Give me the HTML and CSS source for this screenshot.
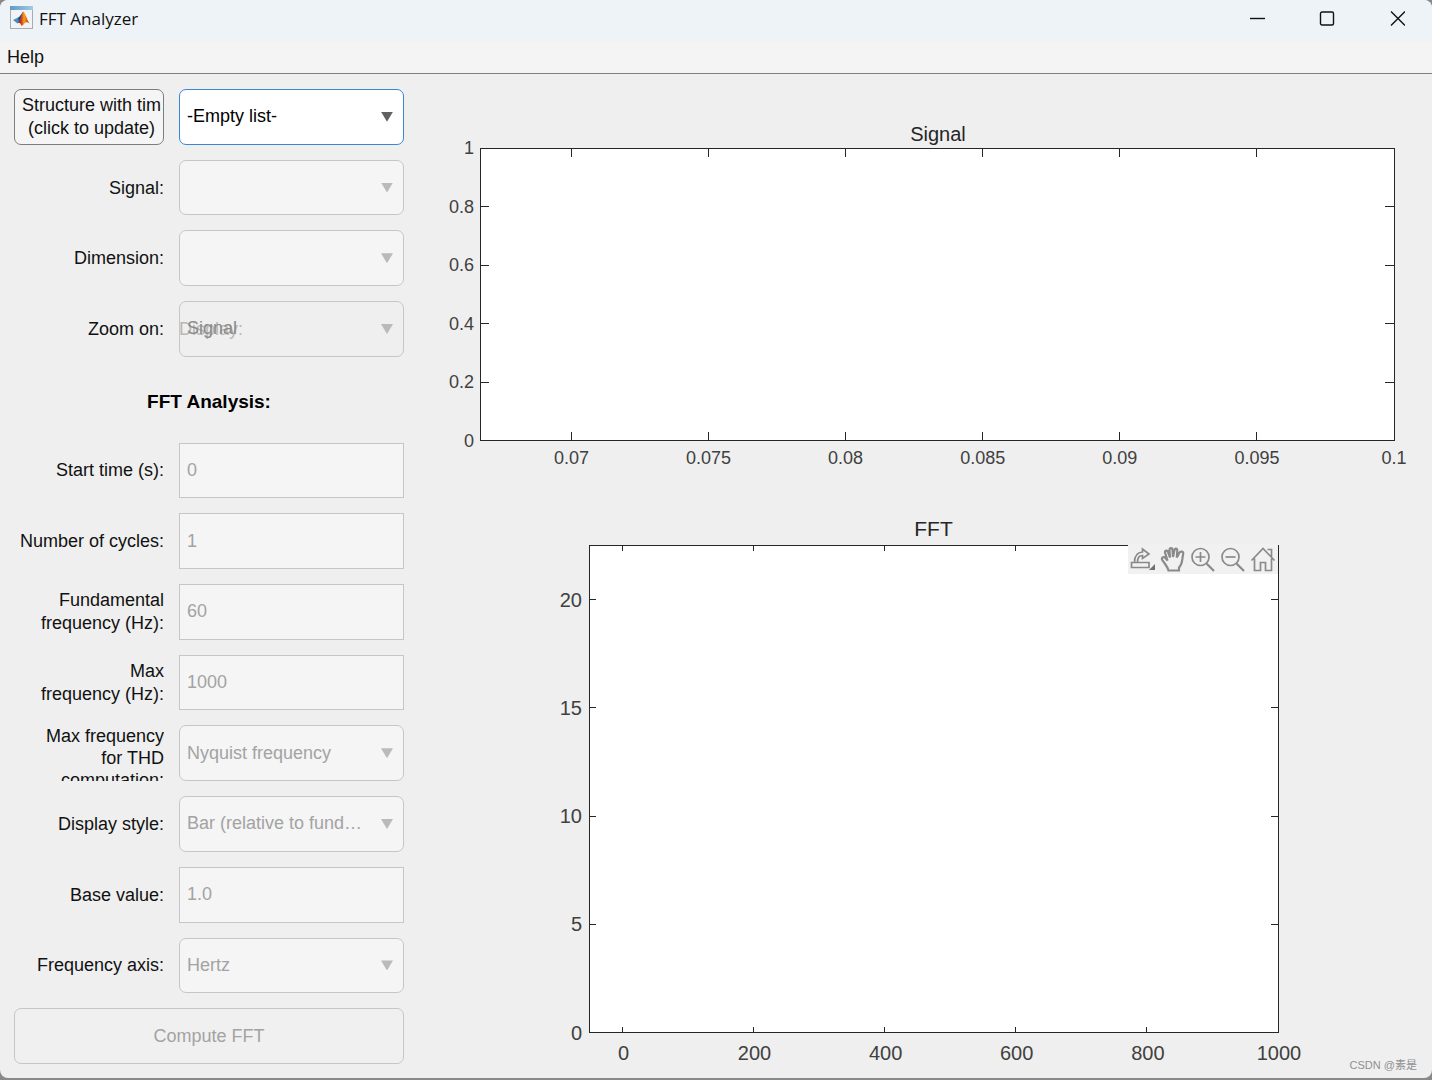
FILE: index.html
```html
<!DOCTYPE html>
<html lang="en">
<head>
<meta charset="utf-8">
<meta name="viewport" content="width=device-width, initial-scale=1">
<title>FFT Analyzer</title>
<link rel="stylesheet" href="styles.css">
</head>
<body>
<div class="window">
  <header class="titlebar">
    <svg class="app-icon" viewBox="0 0 23 23" aria-hidden="true">
      <defs>
        <linearGradient id="bar" x1="0" x2="1"><stop offset="0" stop-color="#5f9bc4"/><stop offset="1" stop-color="#a3cbe3"/></linearGradient>
        <linearGradient id="peak" x1="0" x2="1"><stop offset="0" stop-color="#7a1d12"/><stop offset=".35" stop-color="#d9431a"/><stop offset=".55" stop-color="#f6a21c"/><stop offset="1" stop-color="#b3260f"/></linearGradient>
      </defs>
      <rect x="0.5" y="0.5" width="22" height="22" fill="#f2f3f5" stroke="#a5acb3"/>
      <rect x="0" y="0" width="23" height="4" fill="url(#bar)"/>
      <path d="M3 14 8 11.5 10.5 14.5 7.500 17.500z" fill="#3f8fc4"/>
      <path d="M8 11.500C10 11 11 8 13 6L11.500 14 9 16z" fill="#1e4f8c"/>
      <path d="M13 5.500C15 6 16.500 13 19.500 17.500 17 15.500 15.500 16 14 18 12.500 20 11.500 20 11 19 10.500 17 9 16.500 7.500 17.500 10.500 15 11.500 7 13 5.500z" fill="url(#peak)"/>
    </svg>
    <h1 class="title">FFT Analyzer</h1>
    <div class="window-buttons">
      <button class="window-button" type="button" aria-label="Minimize"><svg viewBox="0 0 16 16"><path d="M1 7.500H16"/></svg></button>
      <button class="window-button" type="button" aria-label="Maximize"><svg viewBox="0 0 16 16"><rect x="1.500" y="1" width="13" height="13" rx="1.500"/></svg></button>
      <button class="window-button" type="button" aria-label="Close"><svg viewBox="0 0 16 16"><path d="M2 0.500 16 14.500M16 0.500 2 14.500"/></svg></button>
    </div>
  </header>
  <nav class="menubar"><button class="menu" type="button">Help</button></nav>

  <main class="content">
    <form class="form">
      <button class="button update" type="button">Structure with tim<br>(click to update)</button>
      <div class="picker"><select class="field select active" aria-label="Structure with time"><option>-Empty list-</option></select><span class="arrow"></span></div>

      <label class="label" for="signal">Signal:</label>
      <div class="picker"><select class="field select" id="signal" disabled><option></option></select><span class="arrow"></span></div>

      <label class="label" for="dimension">Dimension:</label>
      <div class="picker"><select class="field select" id="dimension" disabled><option></option></select><span class="arrow"></span></div>

      <label class="label" for="zoom">Zoom on:</label>
      <div class="picker"><span class="ghost">Display:</span><select class="field select clear" id="zoom" disabled><option>Signal</option></select><span class="arrow"></span></div>

      <h2 class="heading">FFT Analysis:</h2>

      <label class="label" for="start">Start time (s):</label>
      <input class="field" id="start" value="0" disabled>

      <label class="label" for="cycles">Number of cycles:</label>
      <input class="field" id="cycles" value="1" disabled>

      <label class="label" for="fundamental">Fundamental frequency (Hz):</label>
      <input class="field" id="fundamental" value="60" disabled>

      <label class="label" for="maxfreq">Max<br>frequency (Hz):</label>
      <input class="field" id="maxfreq" value="1000" disabled>

      <label class="label cropped" for="thd">Max frequency<br>for THD computation:</label>
      <div class="picker"><select class="field select" id="thd" disabled><option>Nyquist frequency</option></select><span class="arrow"></span></div>

      <label class="label" for="style">Display style:</label>
      <div class="picker"><select class="field select" id="style" disabled><option>Bar (relative to fundamental)</option></select><span class="arrow"></span></div>

      <label class="label" for="base">Base value:</label>
      <input class="field" id="base" value="1.0" disabled>

      <label class="label" for="axis">Frequency axis:</label>
      <div class="picker"><select class="field select" id="axis" disabled><option>Hertz</option></select><span class="arrow"></span></div>

      <button class="button compute" type="button" disabled>Compute FFT</button>
    </form>

    <section class="charts">
      <div class="chart signal-chart">
        <svg class="plot" role="img" aria-label="Signal">
          <rect class="frame" width="100%" height="100%"/>
          <text class="chart-title" x="50%" dx="1" y="-7">Signal</text>
          <g class="ticks">
            <line x1="10%" x2="10%" y2="9"/><line x1="25%" x2="25%" y2="9"/><line x1="40%" x2="40%" y2="9"/><line x1="55%" x2="55%" y2="9"/><line x1="70%" x2="70%" y2="9"/><line x1="85%" x2="85%" y2="9"/>
            <line y1="20%" y2="20%" x2="9"/><line y1="40%" y2="40%" x2="9"/><line y1="60%" y2="60%" x2="9"/><line y1="80%" y2="80%" x2="9"/>
          </g>
          <svg class="edge ticks" y="100%">
            <line x1="10%" x2="10%" y2="-9"/><line x1="25%" x2="25%" y2="-9"/><line x1="40%" x2="40%" y2="-9"/><line x1="55%" x2="55%" y2="-9"/><line x1="70%" x2="70%" y2="-9"/><line x1="85%" x2="85%" y2="-9"/>
          </svg>
          <svg class="edge ticks" x="100%">
            <line y1="20%" y2="20%" x2="-9"/><line y1="40%" y2="40%" x2="-9"/><line y1="60%" y2="60%" x2="-9"/><line y1="80%" y2="80%" x2="-9"/>
          </svg>
          <g class="y-labels">
            <text x="-6" dy="6" y="0%">1</text><text x="-6" dy="6" y="20%">0.8</text><text x="-6" dy="6" y="40%">0.6</text><text x="-6" dy="6" y="60%">0.4</text><text x="-6" dy="6" y="80%">0.2</text><text x="-6" dy="6" y="100%">0</text>
          </g>
          <g class="x-labels">
            <text y="100%" dy="23" x="10%">0.07</text><text y="100%" dy="23" x="25%">0.075</text><text y="100%" dy="23" x="40%">0.08</text><text y="100%" dy="23" x="55%">0.085</text><text y="100%" dy="23" x="70%">0.09</text><text y="100%" dy="23" x="85%">0.095</text><text y="100%" dy="23" x="100%">0.1</text>
          </g>
        </svg>
      </div>

      <div class="chart fft-chart">
        <svg class="plot" role="img" aria-label="FFT">
          <rect class="frame" width="100%" height="100%"/>
          <text class="chart-title" x="50%" y="-9">FFT</text>
          <g class="ticks">
            <line x1="4.860%" x2="4.860%" y2="6"/><line x1="23.880%" x2="23.880%" y2="6"/><line x1="42.900%" x2="42.900%" y2="6"/><line x1="61.920%" x2="61.920%" y2="6"/>
            <line y1="11.200%" y2="11.200%" x2="7"/><line y1="33.400%" y2="33.400%" x2="7"/><line y1="55.600%" y2="55.600%" x2="7"/><line y1="77.800%" y2="77.800%" x2="7"/>
          </g>
          <svg class="edge ticks" y="100%">
            <line x1="4.860%" x2="4.860%" y2="-6"/><line x1="23.880%" x2="23.880%" y2="-6"/><line x1="42.900%" x2="42.900%" y2="-6"/><line x1="61.920%" x2="61.920%" y2="-6"/><line x1="80.980%" x2="80.980%" y2="-6"/>
          </svg>
          <svg class="edge ticks" x="100%">
            <line y1="11.200%" y2="11.200%" x2="-7"/><line y1="33.400%" y2="33.400%" x2="-7"/><line y1="55.600%" y2="55.600%" x2="-7"/><line y1="77.800%" y2="77.800%" x2="-7"/>
          </svg>
          <g class="y-labels">
            <text x="-7" dy="7" y="11.200%">20</text><text x="-7" dy="7" y="33.400%">15</text><text x="-7" dy="7" y="55.600%">10</text><text x="-7" dy="7" y="77.800%">5</text><text x="-7" dy="7" y="100%">0</text>
          </g>
          <g class="x-labels">
            <text y="100%" dx="1" dy="27" x="4.860%">0</text><text y="100%" dx="1" dy="27" x="23.880%">200</text><text y="100%" dx="1" dy="27" x="42.900%">400</text><text y="100%" dx="1" dy="27" x="61.920%">600</text><text y="100%" dx="1" dy="27" x="80.980%">800</text><text y="100%" dx="1" dy="27" x="100%">1000</text>
          </g>
        </svg>
        <div class="toolbar">
          <button class="tool" type="button" aria-label="Export"><svg viewBox="0 0 30 30"><path d="M3.500 18.500H21V23.500H3.500zM6.500 18C6.500 12 9.500 8.500 14.500 8V5L21 10 14.500 14.500V11.500C11.500 11.500 9.500 13.500 9.500 18"/><path class="solid" d="M27 20V26H21z"/></svg></button>
          <button class="tool" type="button" aria-label="Pan"><svg viewBox="0 0 30 30"><path class="thick" d="M10.500 26.500C9.500 22 6 19 4 15.500 3.500 13 6 12.500 7.500 14L9.500 16.500 7 8.500C7 6 9.500 6 10 8L12 13.500 11.500 6C11.500 3.500 14.500 3.500 14.500 6L15 13 16.500 6C17 3.800 19.500 4.200 19.300 6.500L18.800 13.500 21.500 8.500C22.500 6.800 26 7.500 25.200 10 24 14 25 20 21 23.500V26.500z"/></svg></button>
          <button class="tool" type="button" aria-label="Zoom in"><svg viewBox="0 0 30 30"><circle cx="12.500" cy="13" r="8.500"/><path d="M7.500 13H17.500M12.500 8V18"/><path class="thick" d="M18.500 19.500 26 27"/></svg></button>
          <button class="tool" type="button" aria-label="Zoom out"><svg viewBox="0 0 30 30"><circle cx="12.500" cy="13" r="8.500"/><path d="M7.500 13H17.500"/><path class="thick" d="M18.500 19.500 26 27"/></svg></button>
          <button class="tool" type="button" aria-label="Restore view"><svg viewBox="0 0 30 30"><path d="M3.500 16.500 15 4.500 26.500 16.500M6.500 14.500V26.500H12.500V18.500H17.500V26.500H23.500V14.500M19.500 5.500H23.500V12.500"/></svg></button>
        </div>
      </div>
    </section>
  </main>
  <span class="watermark">CSDN @素是</span>
</div>
</body>
</html>
```
FILE: styles.css
```css
* {
  box-sizing: border-box;
}

body {
  margin: 0;
  padding-bottom: 2px;
  height: 100vh;
  min-height: 760px;
  background: #8a8888;
  font: 18px/23px "Liberation Sans", Arial, sans-serif;
  color: #111;
}

button,
input,
select {
  font: inherit;
  color: inherit;
}

.window {
  position: relative;
  display: flex;
  flex-direction: column;
  height: 100%;
  border-radius: 8px;
  overflow: hidden;
  background: #efefef;
}

.titlebar {
  display: flex;
  align-items: center;
  height: 41px;
  padding-left: 10px;
  background: #eef3f8;
}

.app-icon {
  width: 23px;
  height: 23px;
  margin-bottom: 6px;
}

.title {
  margin: 0 auto 5px 6px;
  font: 17px/23px "Open Sans", "Segoe UI", sans-serif;
  color: #111;
}

.window-buttons {
  display: flex;
  align-self: stretch;
}

.window-button {
  display: grid;
  place-items: center;
  width: 70px;
  padding: 0 0 4px;
  border: 0;
  background: none;
}

.window-button svg {
  width: 16px;
  height: 16px;
  fill: none;
  stroke: #111;
  stroke-width: 1.4;
}

.menubar {
  display: flex;
  height: 33px;
  border-bottom: 1px solid #808080;
  background: #f4f4f4;
}

.menu {
  padding: 0 7px;
  border: 0;
  background: none;
}

.content {
  display: flex;
  flex: 1;
  min-height: 0;
}

.form {
  display: grid;
  grid-template-columns: 150px 225px;
  grid-template-rows: repeat(14, minmax(0, 1fr));
  gap: 15px;
  padding: 15px 0 14px 14px;
}

.button {
  border: 1px solid #c6c6c6;
  border-radius: 7px;
  background: #f0f0f0;
}

.button:disabled {
  color: #a3a3a3;
}

.update {
  padding: 0 0 0 5px;
  border-color: #7d7d7d;
  background: #f5f5f5;
  white-space: nowrap;
  overflow: hidden;
}

.compute,
.heading {
  grid-column: 1 / -1;
}

.heading {
  margin: 0;
  padding-top: 3px;
  align-self: center;
  text-align: center;
  font-size: 19px;
  color: #000;
}

.label {
  align-self: center;
  padding-top: 1px;
  text-align: right;
}

.cropped {
  align-self: stretch;
  min-height: 0;
  padding-top: 0;
  line-height: 22px;
  overflow: hidden;
}

.picker {
  display: grid;
  grid-template: minmax(0, 1fr) / minmax(0, 1fr);
  align-items: center;
  min-height: 0;
}

.picker > * {
  grid-area: 1 / 1;
}

.field {
  width: 100%;
  height: 100%;
  min-height: 0;
  padding: 0 7px;
  border: 1px solid #c6c6c6;
  border-radius: 0;
  background: #f5f5f5;
}

.field:disabled {
  color: #a3a3a3;
  opacity: 1;
}

.select {
  appearance: none;
  padding-right: 38px;
  border-radius: 7px;
  text-overflow: ellipsis;
}

.active {
  border-color: #3a87d6;
  background: #fff;
  color: #000;
}

.clear,
.clear:disabled {
  background: none;
  color: #8a8a8a;
}

.ghost {
  padding-top: 2px;
  color: #b8b8b8;
}

.arrow {
  justify-self: end;
  width: 12px;
  height: 10px;
  margin-right: 11px;
  background: #bababa;
  clip-path: polygon(0 0, 100% 0, 50% 100%);
  pointer-events: none;
}

.active + .arrow {
  background: #616161;
}

.charts {
  display: flex;
  flex: 1;
  flex-direction: column;
  gap: 104px;
  min-width: 0;
  padding: 74px 38px 46px 76px;
}

.chart {
  position: relative;
  min-height: 0;
}

.signal-chart {
  flex: 3 0 0;
  font-size: 18px;
}

.fft-chart {
  flex: 5 0 0;
  margin: 0 116px 0 109px;
  font-size: 20px;
}

.plot {
  display: block;
  width: 100%;
  height: 100%;
  overflow: visible;
  fill: #404040;
}

.frame {
  fill: #fff;
  stroke: #262626;
  shape-rendering: crispEdges;
}

.ticks {
  stroke: #262626;
  shape-rendering: crispEdges;
}

.edge {
  overflow: visible;
}

.chart-title {
  font-size: 20px;
  text-anchor: middle;
  fill: #262626;
}

.fft-chart .chart-title {
  font-size: 21px;
}

.y-labels {
  text-anchor: end;
}

.x-labels {
  text-anchor: middle;
}

.toolbar {
  position: absolute;
  top: -1px;
  right: 0;
  display: flex;
  height: 30px;
  background: #f1f1f1;
}

.tool {
  width: 30px;
  padding: 0;
  border: 0;
  background: none;
}

.tool svg {
  display: block;
  width: 30px;
  height: 30px;
  fill: none;
  stroke: #8a8a8a;
  stroke-width: 1.7;
}

.tool .solid {
  fill: #707070;
  stroke: none;
}

.tool .thick {
  stroke-width: 2.2;
}

.watermark {
  position: absolute;
  right: 15px;
  bottom: 4px;
  font: 11px/18px "Liberation Sans", "Noto Sans CJK SC", sans-serif;
  color: #909090;
}
```
